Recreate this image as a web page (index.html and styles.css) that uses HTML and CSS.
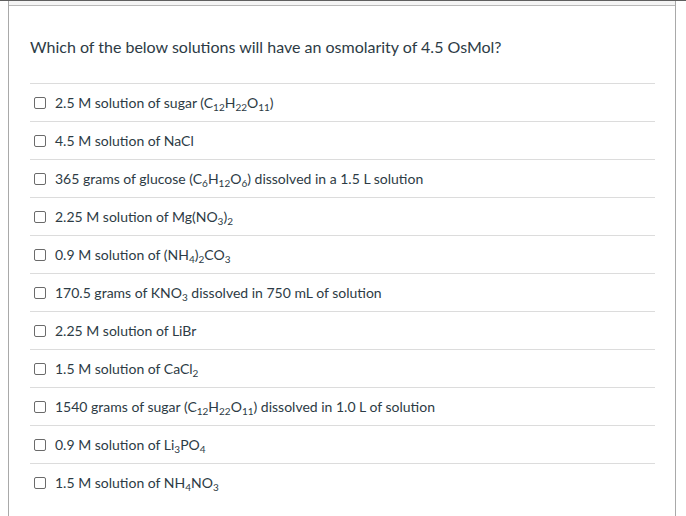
FILE: index.html
```html
<!DOCTYPE html>
<html>
<head>
<meta charset="utf-8">
<link rel="stylesheet" href="styles.css">
</head>
<body>
<div class="topbar"></div>
<div class="panel">
  <div class="question">Which of the below solutions will have an osmolarity of 4.5 OsMol?</div>
  <ul class="answers">
    <li class="answer"><span class="box"></span><span class="label">2.5 M solution of sugar (C<sub>12</sub>H<sub>22</sub>O<sub>11</sub>)</span></li>
    <li class="answer"><span class="box"></span><span class="label">4.5 M solution of NaCl</span></li>
    <li class="answer"><span class="box"></span><span class="label">365 grams of glucose (C<sub>6</sub>H<sub>12</sub>O<sub>6</sub>) dissolved in a 1.5 L solution</span></li>
    <li class="answer"><span class="box"></span><span class="label">2.25 M solution of Mg(NO<sub>3</sub>)<sub>2</sub></span></li>
    <li class="answer"><span class="box"></span><span class="label">0.9 M solution of (NH<sub>4</sub>)<sub>2</sub>CO<sub>3</sub></span></li>
    <li class="answer"><span class="box"></span><span class="label">170.5 grams of KNO<sub>3</sub> dissolved in 750 mL of solution</span></li>
    <li class="answer"><span class="box"></span><span class="label">2.25 M solution of LiBr</span></li>
    <li class="answer"><span class="box"></span><span class="label">1.5 M solution of CaCl<sub>2</sub></span></li>
    <li class="answer"><span class="box"></span><span class="label">1540 grams of sugar (C<sub>12</sub>H<sub>22</sub>O<sub>11</sub>) dissolved in 1.0 L of solution</span></li>
    <li class="answer"><span class="box"></span><span class="label">0.9 M solution of Li<sub>3</sub>PO<sub>4</sub></span></li>
    <li class="answer"><span class="box"></span><span class="label">1.5 M solution of NH<sub>4</sub>NO<sub>3</sub></span></li>
  </ul>
</div>
</body>
</html>
```

FILE: styles.css
```css
html, body {
  margin: 0;
  padding: 0;
  background: #fff;
}
body {
  font-family: Lato, "Liberation Sans", sans-serif;
  color: #2d3b45;
  height: 516px;
  overflow: hidden;
}
.topbar {
  height: 1px;
  background: #5f5f5f;
}
.panel {
  box-sizing: border-box;
  margin: 0 10px 0 8px;
  border-left: 1px solid #a9a9a9;
  border-right: 1px solid #a9a9a9;
  padding: 4px 20px 0 21px;
  position: relative;
  background: #fff;
  height: 515px;
}
.panel::before {
  content: "";
  position: absolute;
  left: 0;
  right: 0;
  top: 0;
  height: 4px;
  background: #f4f4f4;
  border-bottom: 1px solid #b9b9b9;
}
.question {
  font-size: 16px;
  line-height: 20px;
  padding-top: 32px;
  padding-bottom: 26px;
}
.answers {
  list-style: none;
  margin: 0;
  padding: 0;
}
.answer {
  display: flex;
  align-items: center;
  gap: 9px;
  height: 37px;
  border-top: 1px solid #dcdcdc;
  padding-left: 4px;
  font-size: 14px;
}
.box {
  width: 10px;
  height: 10px;
  border: 1px solid #6b6b6b;
  border-radius: 2px;
  flex: none;
  margin-top: 1px;
}
.label sub {
  font-size: 10px;
  line-height: 0;
  vertical-align: -3px;
}
```
